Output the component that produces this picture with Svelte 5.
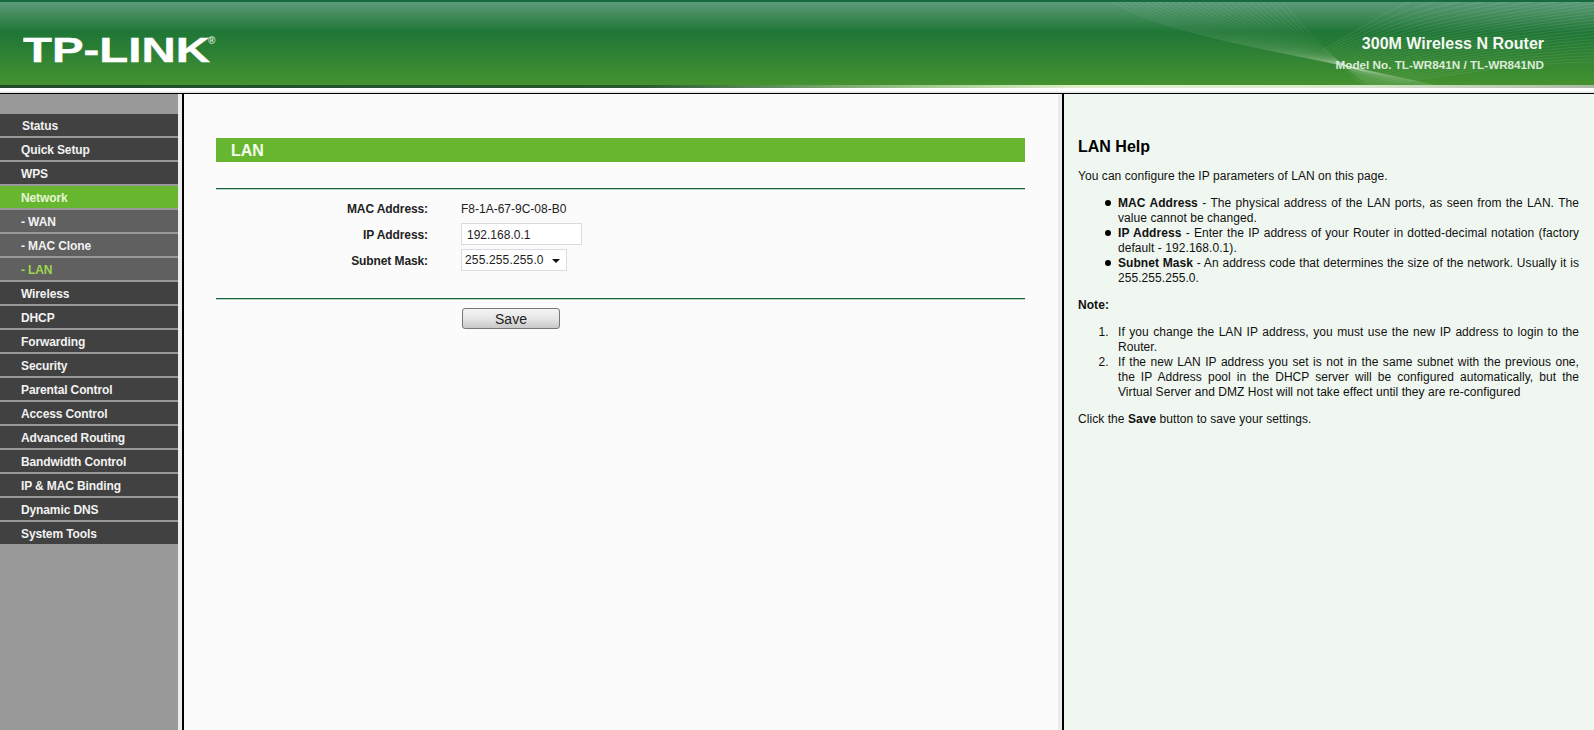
<script>
  const nav = [
    { label: 'Status', x: 1 },
    { label: 'Quick Setup' },
    { label: 'WPS' },
    { label: 'Network', kind: 'active' },
    { label: '- WAN', kind: 'sub' },
    { label: '- MAC Clone', kind: 'sub' },
    { label: '- LAN', kind: 'sub current' },
    { label: 'Wireless' },
    { label: 'DHCP' },
    { label: 'Forwarding' },
    { label: 'Security' },
    { label: 'Parental Control' },
    { label: 'Access Control' },
    { label: 'Advanced Routing' },
    { label: 'Bandwidth Control' },
    { label: 'IP & MAC Binding' },
    { label: 'Dynamic DNS' },
    { label: 'System Tools' }
  ];

  const lerp = (a, b, t) => a + (b - a) * t;
  const sweep = [];
  const fan = [];
  for (let i = 0; i <= 26; i++) {
    const t = i / 26;
    sweep.push(
      `M${lerp(1113, 1283, t)} 2C${lerp(1180, 1310, t)} ${lerp(40, 35, t)} ${lerp(1285, 1318, t)} ${lerp(50, 46, t)} ${lerp(1455, 1375, t)} 90`
    );
    const endX = t < 0.3 ? lerp(1410, 1600, t / 0.3) : 1600;
    const endY = t < 0.3 ? 2 : lerp(2, 62, (t - 0.3) / 0.7);
    fan.push(
      `M${lerp(1322, 1365, t)} ${lerp(50, 88, t)}C${lerp(1362, 1445, t)} ${lerp(28, 76, t)} ${lerp(1385, 1520, t)} ${lerp(12, 62, t)} ${endX} ${endY}`
    );
  }
</script>

<div class="page">
  <header class="banner">
    <svg class="waves" viewBox="0 0 1594 85" width="1594" height="85" aria-hidden="true">
      {#each sweep as d}<path {d} />{/each}
      {#each fan as d}<path {d} />{/each}
    </svg>
    <svg class="logo" width="200" height="46" viewBox="0 0 200 46" role="img" aria-label="TP-LINK">
      <text class="logo-word" x="0" y="35" textLength="187" lengthAdjust="spacingAndGlyphs">TP-LINK</text>
      <text class="logo-mark" x="185" y="17">®</text>
    </svg>
    <div class="product">
      <div class="product-name">300M Wireless N Router</div>
      <div class="product-model">Model No. TL-WR841N / TL-WR841ND</div>
    </div>
  </header>
  <div class="stripe"></div>
  <div class="rule"></div>

  <div class="columns">
    <nav class="sidebar">
      {#each nav as item}
        <a class="item {item.kind ?? ''}" class:nudge={item.x} href="#top">{item.label}</a>
      {/each}
    </nav>

    <main class="content">
      <h1 class="title">LAN</h1>
      <hr />
      <div class="form">
        <div class="label">MAC Address:</div>
        <div class="value">F8-1A-67-9C-08-B0</div>
        <label class="label" for="ip">IP Address:</label>
        <input id="ip" class="field" value="192.168.0.1" />
        <label class="label" for="mask">Subnet Mask:</label>
        <div class="select-wrap">
          <select id="mask" class="field select">
            <option>255.255.255.0</option>
          </select>
          <span class="caret"></span>
        </div>
      </div>
      <hr class="lower" />
      <div class="actions">
        <button class="save" type="button">Save</button>
      </div>
    </main>

    <aside class="help">
      <h2>LAN Help</h2>
      <p>You can configure the IP parameters of LAN on this page.</p>
      <ul>
        <li><b>MAC Address</b> - The physical address of the LAN ports, as seen from the LAN. The value cannot be changed.</li>
        <li><b>IP Address</b> - Enter the IP address of your Router in dotted-decimal notation (factory default - 192.168.0.1).</li>
        <li><b>Subnet Mask</b> - An address code that determines the size of the network. Usually it is 255.255.255.0.</li>
      </ul>
      <p><b>Note:</b></p>
      <ol>
        <li>If you change the LAN IP address, you must use the new IP address to login to the Router.</li>
        <li>If the new LAN IP address you set is not in the same subnet with the previous one, the IP Address pool in the DHCP server will be configured automatically, but the Virtual Server and DMZ Host will not take effect until they are re-configured</li>
      </ol>
      <p>Click the <b>Save</b> button to save your settings.</p>
    </aside>
  </div>
</div>

<style>
  :global(body) {
    margin: 0;
    background: #fff;
  }
  .page {
    width: 1594px;
    height: 730px;
    overflow: hidden;
    display: flex;
    flex-direction: column;
    font: 12px/15px "Liberation Sans", Arial, sans-serif;
    color: #111;
  }

  .banner {
    position: relative;
    flex: 0 0 85px;
    box-sizing: border-box;
    display: flex;
    align-items: flex-start;
    justify-content: space-between;
    padding: 0 50px 0 23px;
    overflow: hidden;
    background: linear-gradient(#16683f 0, #16683f 2px, #5c9b78 2px, #1f7636 32px, #44922f 85px);
  }
  .waves {
    position: absolute;
    left: 0;
    top: 0;
  }
  .waves path {
    fill: none;
    stroke: rgba(255, 255, 255, 0.13);
    stroke-width: 0.7;
  }
  .logo {
    position: relative;
    margin-top: 27px;
  }
  .logo-word {
    font: 700 35px "Liberation Sans", Arial, sans-serif;
    fill: #fff;
    stroke: #fff;
    stroke-width: 0.4;
  }
  .logo-mark {
    font: 700 10px "Liberation Sans", Arial, sans-serif;
    fill: #dbe9d6;
  }
  .product {
    position: relative;
    margin-top: 35px;
    text-align: right;
    font-weight: 700;
  }
  .product-name {
    font-size: 16px;
    line-height: 18px;
    color: #f4f8f2;
  }
  .product-model {
    margin-top: 4px;
    font-size: 11.7px;
    line-height: 15px;
    color: #dcebd9;
  }

  .stripe {
    flex: 0 0 3px;
    background: linear-gradient(90deg, #214a2b 0, #26592f 40%, #9fc98c 58%, #e2f0cc 68%, #d8e8cc 85%, #a9b9a4 100%);
  }
  .rule {
    flex: 0 0 6px;
    box-sizing: border-box;
    border-bottom: 1px solid #000;
    background: linear-gradient(#fff 0, #fff 3px, #dcdcdc 5px);
  }

  .columns {
    flex: 1;
    min-height: 0;
    display: grid;
    grid-template-columns: 184px 880px 530px;
  }

  .sidebar {
    display: flex;
    flex-direction: column;
    gap: 2px;
    box-sizing: border-box;
    padding: 20px 6px 0 0;
    background: linear-gradient(90deg, #999 178px, #ececec 178px, #ececec 182px, #000 182px);
  }
  .item {
    flex: 0 0 22px;
    min-height: 0;
    box-sizing: border-box;
    padding-left: 21px;
    font-weight: 700;
    line-height: 24px;
    letter-spacing: -0.12px;
    color: #f2f2f2;
    background: #414141;
    text-decoration: none;
  }
  .nudge {
    padding-left: 22px;
  }
  .active {
    background: #66b72f;
    color: #e6f5d6;
  }
  .sub {
    padding-left: 21px;
    background: #606060;
  }
  .current {
    color: #9fd44f;
  }

  .content {
    box-sizing: border-box;
    padding: 44px 39px 0 32px;
    background: linear-gradient(90deg, #fbfbfb 874px, #ececec 874px, #ececec 878px, #000 878px);
  }
  .title {
    margin: 0;
    height: 24px;
    padding-left: 15px;
    font-size: 16px;
    font-weight: 700;
    line-height: 26px;
    color: #f6fbef;
    background: #66b72f;
  }
  hr {
    height: 1px;
    margin: 26px 0 0;
    border: 0;
    background: #15633c;
    box-shadow: 0 1px 0 #b9d8c4;
  }
  .form {
    display: grid;
    grid-template-columns: 212px 1fr;
    column-gap: 33px;
    row-gap: 4px;
    align-items: center;
    padding-top: 8px;
  }
  .label {
    padding-top: 2px;
    text-align: right;
    font-weight: 700;
    letter-spacing: -0.1px;
    color: #222;
  }
  .value {
    height: 22px;
    line-height: 24px;
    color: #222;
  }
  .field {
    box-sizing: border-box;
    width: 121px;
    height: 22px;
    padding: 1px 5px 0;
    border: 1px solid #d8dce2;
    background: #fff;
    font: 12px "Liberation Sans", Arial, sans-serif;
    color: #222;
    outline: none;
  }
  .select-wrap {
    position: relative;
    width: 106px;
    height: 22px;
  }
  .select {
    width: 106px;
    padding: 0 3px;
    letter-spacing: 0.15px;
    appearance: none;
    border-radius: 0;
  }
  .caret {
    position: absolute;
    top: 10px;
    right: 7px;
    border: 4px solid transparent;
    border-top-color: #111;
    border-bottom: 0;
  }
  .lower {
    margin-top: 27px;
  }
  .actions {
    padding: 9px 0 0 246px;
  }
  .save {
    box-sizing: border-box;
    width: 98px;
    height: 21px;
    padding: 2px 0 0;
    border: 1px solid #777;
    border-radius: 3px;
    background: linear-gradient(#f4f4f4, #e6e6e6 50%, #c8c8c8);
    font: 14px/17px "Liberation Sans", Arial, sans-serif;
    color: #222;
  }

  .help {
    box-sizing: border-box;
    padding: 44px 15px 0 14px;
    background: #f0f7f0;
    text-align: justify;
    letter-spacing: 0.06px;
  }
  .help h2 {
    margin: 0 0 12.5px;
    font-size: 16px;
    line-height: 18px;
    font-weight: 700;
    letter-spacing: 0;
    color: #000;
    text-align: left;
  }
  .help p {
    margin: 12px 0;
  }
  .help h2 + p {
    margin-top: 0;
  }
  .help ul,
  .help ol {
    margin: 12px 0;
    padding-left: 40px;
  }
  .help ul {
    list-style: none;
  }
  .help ul li {
    position: relative;
  }
  .help ul li::before {
    content: "";
    position: absolute;
    top: 4px;
    left: -13px;
    width: 6px;
    height: 6px;
    border-radius: 50%;
    background: #000;
  }
  .help ol li::marker {
    content: counter(list-item) ".\00a0\00a0\2009";
  }
</style>
